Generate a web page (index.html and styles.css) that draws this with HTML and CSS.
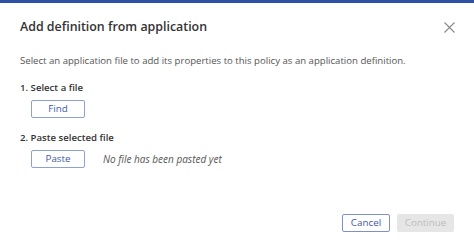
FILE: index.html
```html
<!DOCTYPE html>
<html>
<head>
<meta charset="utf-8">
<link rel="stylesheet" href="styles.css">
</head>
<body>
<div class="dialog">
  <div class="topbar"></div>
  <div class="header">
    <h1 class="title">Add definition from application</h1>
    <button class="close" aria-label="Close">
      <svg width="11" height="11" viewBox="0 0 11 11"><path d="M0.5 0.5L10.5 10.5M10.5 0.5L0.5 10.5" stroke="#8a8a8a" stroke-width="1.1" fill="none"/></svg>
    </button>
  </div>
  <div class="body">
    <p class="intro">Select an application file to add its properties to this policy as an application definition.</p>
    <div class="step">
      <div class="label">1. Select a file</div>
      <div class="row"><button class="btn">Find</button></div>
    </div>
    <div class="step">
      <div class="label">2. Paste selected file</div>
      <div class="row"><button class="btn">Paste</button><span class="note">No file has been pasted yet</span></div>
    </div>
  </div>
  <div class="footer">
    <button class="btn btn-cancel">Cancel</button>
    <button class="btn btn-disabled" disabled>Continue</button>
  </div>
</div>
</body>
</html>
```
FILE: styles.css
```css
html, body { margin: 0; padding: 0; background: #fff; }
body { font-family: "Open Sans", "Noto Sans", sans-serif; color: #333; }
.dialog { width: 474px; height: 247px; display: flex; flex-direction: column; box-sizing: border-box; }
.topbar { height: 3px; background: #2d4fa6; flex: none; }
.header { display: flex; align-items: center; justify-content: space-between; padding: 16px 19px 0 20px; height: 16px; }
.title { margin: 0; font-size: 12.4px; font-weight: 600; color: #333; line-height: 16px; }
.close { border: 0; background: none; padding: 0; width: 11px; height: 11px; display: flex; }
.body { padding: 0 20px; }
.intro { margin: 20px 0 0 0; font-size: 9.6px; line-height: 12px; color: #555; }
.step { margin-top: 15px; }
.step + .step { margin-top: 14px; }
.label { font-size: 9.6px; font-weight: 600; color: #333; line-height: 12px; }
.row { display: flex; align-items: center; margin-top: 6px; padding-left: 11px; }
.btn { font-family: inherit; font-size: 9.8px; line-height: 12px; box-sizing: border-box; height: 18px; border: 1px solid #8fa0cf; border-radius: 2px; background: #fff; color: #3c5aa8; padding: 0; width: 54px; }
.note { margin-left: 18px; font-size: 10px; font-style: italic; color: #555; }
.footer { margin-top: auto; display: flex; justify-content: flex-end; gap: 7px; padding: 0 20px 15px 0; }
.btn-cancel { width: 48px; border-color: #7f92c8; }
.btn-disabled { width: 57px; background: #e6e6e6; border-color: #e6e6e6; color: #bdbdbd; }
```
